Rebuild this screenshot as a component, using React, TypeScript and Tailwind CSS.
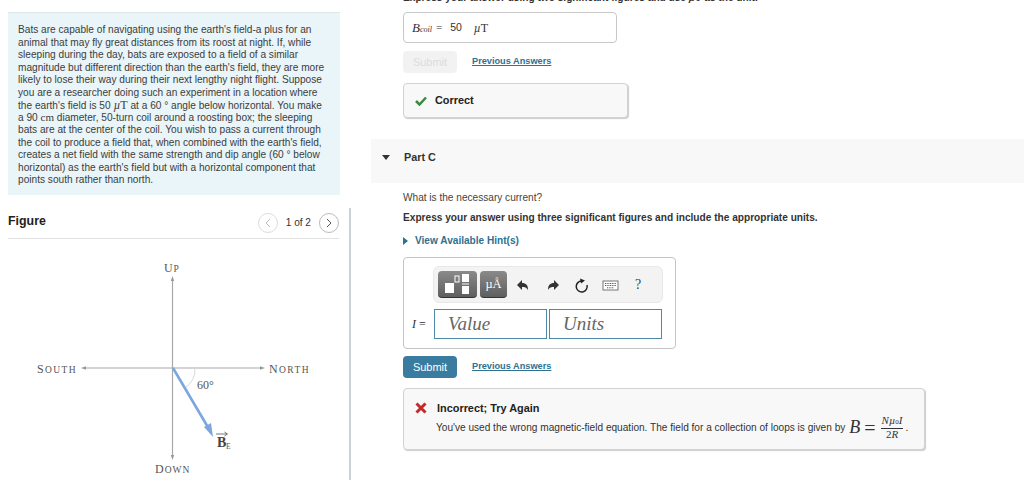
const sans = "font-['Liberation_Sans',Arial,sans-serif]";

function Figure() {
  return (
    <svg width="350" height="240" viewBox="0 0 350 240" className="block">
      <g fill="none" stroke="#a8a8a8" strokeWidth="1.2">
        <line x1="172.500" y1="40" x2="172.500" y2="218" />
        <line x1="84" y1="129" x2="262" y2="129" />
        <path d="M195 129 A23 23 0 0 1 185 149" stroke="#d8d8d8" strokeWidth="1" />
      </g>
      <g fill="#999">
        <path d="M172.500 37 L170.800 42 L174.200 42 Z" />
        <path d="M172.500 221 L170.800 216 L174.200 216 Z" />
        <path d="M81 129 L86 127.300 L86 130.700 Z" />
        <path d="M265 129 L260 127.300 L260 130.700 Z" />
      </g>
      <line x1="173" y1="129" x2="209" y2="190" stroke="#7ba7de" strokeWidth="2.600" />
      <path d="M213 198 L204 188 L211 184 Z" fill="#7ba7de" />
      <g fill="#555" fontFamily="'Liberation Serif', serif">
        <text x="164" y="33" fontSize="12" letterSpacing="0.8">U<tspan fontSize="9.500">P</tspan></text>
        <text x="37" y="134" fontSize="12" letterSpacing="1.400">S<tspan fontSize="9.500">OUTH</tspan></text>
        <text x="269" y="134" fontSize="12" letterSpacing="1.400">N<tspan fontSize="9.500">ORTH</tspan></text>
        <text x="155" y="234" fontSize="12" letterSpacing="1">D<tspan fontSize="9.500">OWN</tspan></text>
        <text x="197" y="150" fontSize="12">60°</text>
        <text x="217" y="208" fontSize="14" fontWeight="bold" fill="#444">B</text>
        <text x="226" y="210" fontSize="7.500" fill="#555">E</text>
      </g>
      <path d="M216 195 H227 M224.500 193 L227.500 195 L224.500 197" fill="none" stroke="#555" strokeWidth="0.8" />
    </svg>
  );
}

function Toolbar() {
  return (
    <div className="flex h-[37px] w-[230px] items-center gap-[3px] rounded-md border border-[#e8e8e8] bg-[#f3f3f3] pl-[4px]">
      <div className="flex h-[27px] w-[39px] items-center justify-center rounded border-b border-[#333] bg-gradient-to-b from-[#8a8a8a] to-[#5f5f5f]">
        <svg width="26" height="21" viewBox="0 0 26 21">
          <rect x="0" y="9" width="9" height="10" fill="#fff" />
          <rect x="10" y="2" width="4" height="6" fill="none" stroke="#fff" strokeWidth="1" />
          <rect x="17" y="0" width="7" height="8" fill="#fff" />
          <rect x="17" y="9.500" width="7" height="1" fill="#fff" />
          <rect x="17" y="12" width="7" height="8" fill="#fff" />
        </svg>
      </div>
      <div className="flex h-[27px] w-[27px] items-center justify-center rounded border-b border-[#333] bg-gradient-to-b from-[#8a8a8a] to-[#5f5f5f] font-['Liberation_Serif',serif] text-[12.500px] text-white">
        µÅ
      </div>
      <svg width="132" height="20" viewBox="0 0 132 20" className="ml-[3px]">
        <path d="M4 10 L9 5 V8 C13 8 15 10 15 15 C13 12 12 12 9 12 V15 Z" fill="#333" />
        <path d="M46 10 L41 5 V8 C37 8 35 10 35 15 C37 12 38 12 41 12 V15 Z" fill="#333" />
        <path d="M69 6 A5.500 5.500 0 1 0 74 10" fill="none" stroke="#222" strokeWidth="1.500" />
        <path d="M67 3.500 L72 5.500 L68 8.500 Z" fill="#222" />
        <rect x="90" y="6" width="15" height="9" fill="#fff" stroke="#555" strokeWidth="0.8" />
        <path d="M92 8.500 H103 M92 10.500 H103 M94 12.800 H101" stroke="#555" strokeWidth="1" strokeDasharray="1 0.700" />
      </svg>
      <span className="ml-[-13px] font-['Liberation_Serif',serif] text-[14px] text-[#444]">?</span>
    </div>
  );
}

export default function App() {
  return (
    <div className={`${sans} flex h-[480px] w-[1024px] overflow-hidden bg-white text-[#333]`}>
      {/* left: problem text + figure */}
      <div className="w-[351px] shrink-0">
        <div className="h-[208px] pl-2 pr-[11px] pt-3">
          <div className="h-[183px] border-t border-[#dfe6e8] bg-[#e9f5f8] px-[10px] pt-[11px] text-[10.150px] leading-[12.500px] text-[#3c3c3c]">
            <p className="whitespace-nowrap">Bats are capable of navigating using the earth's field-a plus for an</p>
            <p className="whitespace-nowrap">animal that may fly great distances from its roost at night. If, while</p>
            <p className="whitespace-nowrap">sleeping during the day, bats are exposed to a field of a similar</p>
            <p className="whitespace-nowrap">magnitude but different direction than the earth's field, they are more</p>
            <p className="whitespace-nowrap">likely to lose their way during their next lengthy night flight. Suppose</p>
            <p className="whitespace-nowrap">you are a researcher doing such an experiment in a location where</p>
            <p className="h-[12.500px] whitespace-nowrap">the earth's field is 50 <span className="font-['Liberation_Serif',serif] text-[12px] italic leading-none">µ</span><span className="font-['Liberation_Serif',serif] text-[12px] leading-none">T</span> at a 60 ° angle below horizontal. You make</p>
            <p className="h-[12.500px] whitespace-nowrap">a 90 <span className="font-['Liberation_Serif',serif] text-[11px] leading-none">cm</span> diameter, 50-turn coil around a roosting box; the sleeping</p>
            <p className="whitespace-nowrap">bats are at the center of the coil. You wish to pass a current through</p>
            <p className="whitespace-nowrap">the coil to produce a field that, when combined with the earth's field,</p>
            <p className="whitespace-nowrap">creates a net field with the same strength and dip angle (60 ° below</p>
            <p className="whitespace-nowrap">horizontal) as the earth's field but with a horizontal component that</p>
            <p className="whitespace-nowrap">points south rather than north.</p>
          </div>
        </div>
        <div className="h-[272px] border-r-2 border-[#c8d3dc]">
          <div className="ml-2 mr-[10px] flex h-[31px] items-center justify-between border-b border-[#e2e2e2]">
            <span className="-mt-[4px] text-[12.400px] font-bold text-[#222]">Figure</span>
            <div className="flex items-center gap-[8px] text-[10.100px]">
              <span className="flex h-[20px] w-[20px] items-center justify-center rounded-full border border-[#ddd] text-[#bbb]">
                <svg width="6" height="10" viewBox="0 0 6 10"><path d="M5 1 L1 5 L5 9" fill="none" stroke="currentColor" /></svg>
              </span>
              <span>1 of 2</span>
              <span className="flex h-[20px] w-[20px] items-center justify-center rounded-full border border-[#bbb] text-[#555]">
                <svg width="6" height="10" viewBox="0 0 6 10"><path d="M1 1 L5 5 L1 9" fill="none" stroke="currentColor" /></svg>
              </span>
            </div>
          </div>
          <Figure />
        </div>
      </div>

      {/* right: parts */}
      <div className="min-w-0 flex-1 pl-5">
        <div className="-mt-[8px] ml-[32px] h-[12px] whitespace-nowrap text-[10.150px] font-bold leading-[12px]">
          Express your answer using two significant figures and use <span className="font-['Liberation_Serif',serif] italic">µ</span><span className="font-['Liberation_Serif',serif]">T</span> as the unit.
        </div>
        <div className="ml-[32px] mt-[8px] flex h-[31px] w-[214px] items-center rounded border border-[#c8c8c8] pl-2 font-['Liberation_Serif',serif] text-[10.500px]">
          <i className="text-[13px]">B</i><i className="mt-[4px] text-[8px]">coil</i>
          <span className="ml-[4px] text-[11px]">=</span>
          <span className={`${sans} ml-[8px]`}>50</span>
          <i className="ml-[12px] text-[12px]">µ</i><span className="text-[12px]">T</span>
        </div>
        <div className="ml-[32px] mt-[8px] flex items-center">
          <div className="flex h-[22px] w-[54px] items-center justify-center rounded-sm bg-[#f2f2f2] text-[11px] text-[#dcdcdc]">Submit</div>
          <a className="ml-[15px] text-[9.200px] font-bold text-[#2f7191] underline">Previous Answers</a>
        </div>
        <div className="ml-[32px] mt-[10px] flex h-[35px] w-[225px] items-center rounded border border-[#d2d2d2] bg-[#f8f8f8] pl-[11px] shadow-[1px_1px_1px_#ccc]">
          <svg width="12" height="10" viewBox="0 0 12 10"><path d="M1 5 L4.500 8.500 L11 1.500" fill="none" stroke="#3a8a3f" strokeWidth="2.500" /></svg>
          <span className="ml-[8px] text-[10.900px] font-bold text-[#222]">Correct</span>
        </div>
        <div className="mt-[21px] flex h-[44px] items-center bg-[#f8f8f8] pb-[8px] pl-[11px]">
          <span className="h-0 w-0 border-x-[4px] border-t-[5px] border-x-transparent border-t-[#333]" />
          <span className="ml-[14px] text-[10.800px] font-bold text-[#333]">Part C</span>
        </div>
        <div className="ml-[32px] mt-[9px] text-[10.100px] leading-[12px] text-[#444]">What is the necessary current?</div>
        <div className="ml-[32px] mt-[8px] whitespace-nowrap text-[10.150px] font-bold leading-[12px]">
          Express your answer using three significant figures and include the appropriate units.
        </div>
        <div className="ml-[32px] mt-[11px] flex items-center text-[10.100px] font-bold leading-[12px] text-[#2f7191]">
          <span className="h-0 w-0 border-y-[4px] border-l-[5px] border-y-transparent border-l-[#2f7191]" />
          <span className="ml-[7px]">View Available Hint(s)</span>
        </div>
        <div className="ml-[32px] mt-[10px] h-[92px] w-[273px] rounded border border-[#c4c4c4] pl-[29px] pt-[8px]">
          <Toolbar />
          <div className="-ml-[21px] mt-[6px] flex items-center">
            <span className="w-[22px] font-['Liberation_Serif',serif] text-[12px] text-[#333]"><i>I</i> =</span>
            <div className="flex h-[30px] w-[113px] items-center border border-[#4d8aa5] pl-[13px] font-['Liberation_Serif',serif] text-[19px] italic text-[#666]">Value</div>
            <div className="ml-[2px] flex h-[30px] w-[113px] items-center border border-[#4d8aa5] pl-[13px] font-['Liberation_Serif',serif] text-[19px] italic text-[#666]">Units</div>
          </div>
        </div>
        <div className="ml-[32px] mt-[7px] flex items-center">
          <div className="flex h-[22px] w-[54px] items-center justify-center rounded-sm bg-[#3a7ca0] text-[11px] text-white">Submit</div>
          <a className="ml-[15px] text-[9.200px] font-bold text-[#2f7191] underline">Previous Answers</a>
        </div>
        <div className="ml-[32px] mt-[10px] h-[62px] w-[522px] rounded border border-[#d2d2d2] bg-[#f8f8f8] pl-[11px] pt-[11px] shadow-[1px_1px_1px_#ccc]">
          <div className="flex items-center">
            <svg width="12" height="12" viewBox="0 0 12 12"><path d="M1.500 1.500 L10.500 10.500 M10.500 1.500 L1.500 10.500" stroke="#c32a2a" strokeWidth="3" /></svg>
            <span className="ml-[10px] text-[10.900px] font-bold text-[#222]">Incorrect; Try Again</span>
          </div>
          <div className="ml-[21px] flex h-[23px] items-center whitespace-nowrap text-[10.100px] text-[#333]">
            You've used the wrong magnetic-field equation. The field for a collection of loops is given by
            <span className="ml-[4px] font-['Liberation_Serif',serif] text-[18px] italic">B</span>
            <span className="ml-[4px] font-['Liberation_Serif',serif] text-[20px]">=</span>
            <span className="ml-[5px] flex flex-col items-center font-['Liberation_Serif',serif] text-[11px] leading-[11px]">
              <span className="whitespace-nowrap border-b border-[#333] px-[1px] italic">Nµ<span className="text-[7px] not-italic">0</span>I</span>
              <span>2<i>R</i></span>
            </span>
            <span className="ml-[2px]">.</span>
          </div>
        </div>
      </div>
    </div>
  );
}
